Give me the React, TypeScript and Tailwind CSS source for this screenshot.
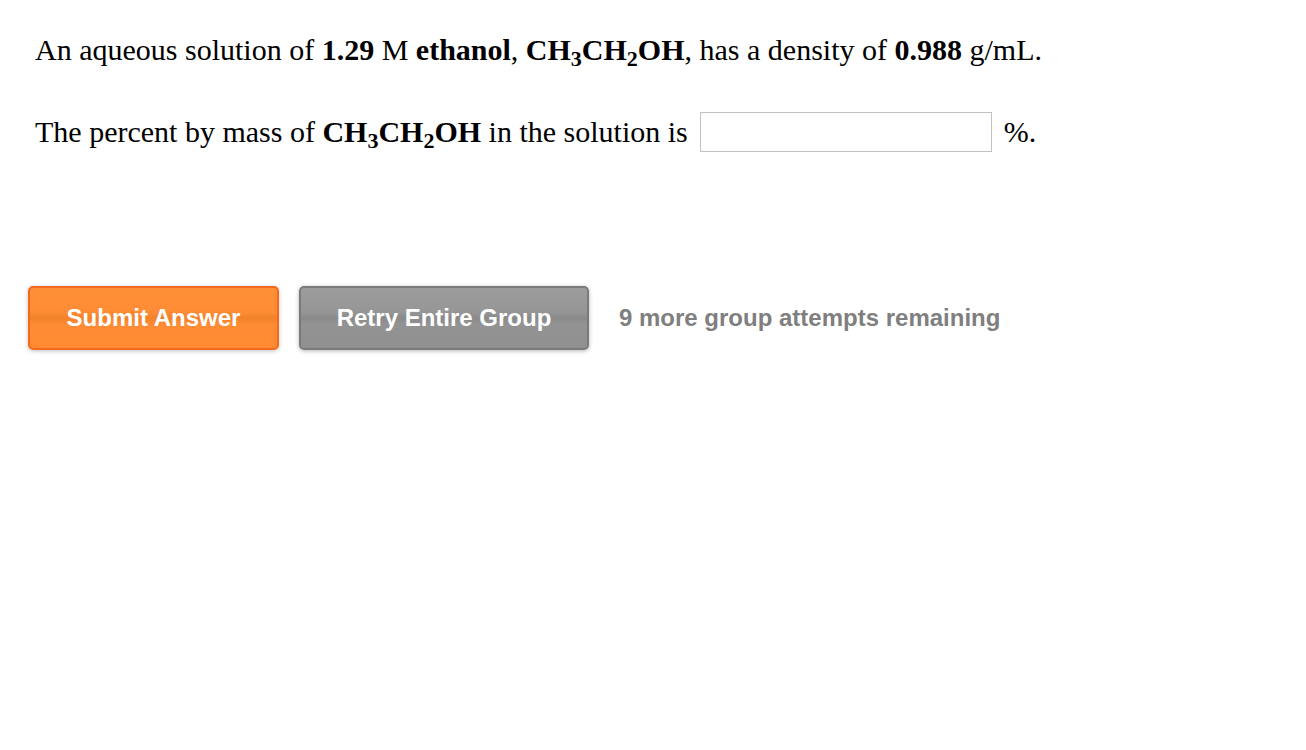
export default function App() {
  return (
    <div className="min-h-[750px] bg-white pl-[35px] pt-[28px]" style={{ fontFamily: '"Liberation Serif", "Times New Roman", serif' }}>
      <p className="text-[30px] leading-[44px] text-black">
        An aqueous solution of <b>1.29</b> M <b>ethanol</b>, <b>CH<sub className="text-[22px]">3</sub>CH<sub className="text-[22px]">2</sub>OH</b>, has a density of <b>0.988</b> g/mL.
      </p>
      <div className="mt-[38px] flex items-center text-[30px] leading-[44px] text-black">
        <span>
          The percent by mass of <b>CH<sub className="text-[22px]">3</sub>CH<sub className="text-[22px]">2</sub>OH</b> in the solution is
        </span>
        <input type="text" className="ml-[12px] h-[40px] w-[292px] border border-[#c0c0c0] bg-white outline-none" />
        <span className="ml-[12px]">%.</span>
      </div>
      <div className="-ml-[7px] mt-[132px] flex items-center gap-[20px]" style={{ fontFamily: '"Liberation Sans", Arial, sans-serif' }}>
        <button className="h-[64px] w-[251px] rounded-[5px] border-2 border-[#f26a1f] bg-[linear-gradient(to_bottom,#ff9038_0%,#ff8c35_40%,#f0822a_50%,#ff8c35_60%,#ff8a32_100%)] text-[24px] font-bold text-white shadow-[0_1px_4px_rgba(0,0,0,0.25)]">
          Submit Answer
        </button>
        <button className="h-[64px] w-[290px] rounded-[5px] border-2 border-[#7a7a7a] bg-[linear-gradient(to_bottom,#9c9c9c_0%,#969696_40%,#8a8a8a_50%,#939393_60%,#909090_100%)] text-[24px] font-bold text-white shadow-[0_1px_4px_rgba(0,0,0,0.3)]">
          Retry Entire Group
        </button>
        <span className="ml-[10px] text-[24px] font-bold text-[#7f7f7f]">9 more group attempts remaining</span>
      </div>
    </div>
  );
}
